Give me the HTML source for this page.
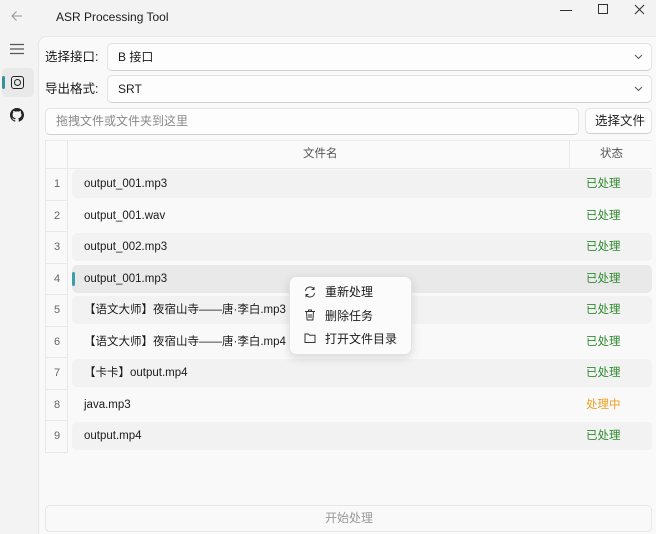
<!DOCTYPE html>
<html><head><meta charset="utf-8"><style>
*{box-sizing:border-box;margin:0;padding:0}
html,body{width:656px;height:534px;overflow:hidden}
body{background:#f3f3f3;font-family:"Liberation Sans","Noto Sans CJK SC",sans-serif;font-size:12px;line-height:14px;color:#1b1b1b;position:relative}
.a{position:absolute;line-height:14px;white-space:nowrap}
.content{left:38px;top:36px;width:630px;height:510px;background:#f9f9f9;border:1px solid #e6e6e6;border-radius:8px 0 0 0}
.box{background:#fdfdfd;border:1px solid #e3e3e3;border-bottom-color:#d0d0d0;border-radius:5px}
.lbl{font-size:12.5px}
.row{left:72px;width:580px;height:28px;border-radius:5px}
.idx{left:46px;width:22px;text-align:center;color:#666;font-size:11px}
.fn{left:84px;font-size:11.5px}
.st{left:586px;font-size:11.5px;color:#2e8b2e}
.ln{background:#e8e8e8}
</style></head><body>
<svg class="a" style="left:10px;top:9px" width="14" height="14" viewBox="0 0 14 14"><path d="M12 7H2M6.5 2.5L2 7l4.5 4.5" fill="none" stroke="#9a9a9a" stroke-width="1.1"/></svg>
<div class="a" style="left:56px;top:10px;font-size:12px">ASR Processing Tool</div>
<div class="a" style="left:560px;top:10px;width:12px;border-top:1px solid #333"></div>
<div class="a" style="left:598px;top:4px;width:10px;height:10px;border:1px solid #333"></div>
<svg class="a" style="left:634px;top:4px" width="11" height="11"><path d="M1 1L10 10M10 1L1 10" stroke="#333" stroke-width="1.1"/></svg>
<svg class="a" style="left:10px;top:43px" width="14" height="12"><path d="M0 1.5H14M0 6H14M0 10.5H14" stroke="#555" stroke-width="1.2"/></svg>
<div class="a" style="left:2px;top:68px;width:32px;height:29px;background:#e9e9e9;border-radius:5px"></div>
<div class="a" style="left:2px;top:76px;width:3px;height:13px;background:#3a8f9b;border-radius:2px"></div>
<div class="a" style="left:11px;top:76px;width:13px;height:13px;border:1.5px solid #222;border-radius:3px"></div>
<div class="a" style="left:14px;top:79px;width:7px;height:7px;border:1.5px solid #222;border-radius:50%"></div>
<svg class="a" style="left:10px;top:108px" width="14" height="14" viewBox="0 0 16 16"><path fill="#222" d="M8 0C3.58 0 0 3.580 0 8c0 3.54 2.29 6.53 5.470 7.59.4.07.55-.17.55-.38v-1.34c-2.23.49-2.7-1.07-2.7-1.07-.36-.92-.89-1.17-.89-1.17-.73-.5.05-.49.05-.49.8.06 1.23.83 1.23.83.72 1.22 1.87.87 2.33.66.07-.52.28-.87.5-1.07-1.78-.2-3.64-.89-3.640-3.95 0-.87.31-1.59.82-2.15-.08-.2-.36-1.02.08-2.12 0 0 .67-.21 2.2.82a7.6 7.6 0 014 0c1.53-1.04 2.2-.82 2.2-.82.44 1.1.16 1.92.08 2.12.51.56.82 1.27.82 2.15 0 3.07-1.87 3.75-3.65 3.95.29.25.54.73.54 1.48v2.2c0 .21.15.46.55.38A8 8 0 0016 8c0-4.42-3.58-8-8-8z"/></svg>
<div class="a content"></div>
<div class="a lbl" style="left:45px;top:50px">选择接口:</div>
<div class="a box" style="left:107px;top:43px;width:545px;height:28px"></div>
<div class="a" style="left:118px;top:50px;font-size:12px">B 接口</div>
<svg class="a" style="left:634px;top:54px" width="9" height="6"><path d="M1 1l3.5 3.5L8 1" fill="none" stroke="#555"/></svg>
<div class="a lbl" style="left:45px;top:82px">导出格式:</div>
<div class="a box" style="left:107px;top:75px;width:545px;height:28px"></div>
<div class="a" style="left:118px;top:82px;font-size:12px">SRT</div>
<svg class="a" style="left:634px;top:86px" width="9" height="6"><path d="M1 1l3.5 3.5L8 1" fill="none" stroke="#555"/></svg>
<div class="a box" style="left:45px;top:108px;width:534px;height:27px"></div>
<div class="a" style="left:56px;top:114px;color:#8a8a8a;font-size:12px">拖拽文件或文件夹到这里</div>
<div class="a box" style="left:585px;top:108px;width:67px;height:26px"></div>
<div class="a" style="left:595px;top:114px;font-size:12.5px">选择文件</div>
<div class="a" style="left:45px;top:140px;width:607px;height:28px;background:#fafafa;border-top:1px solid #ececec"></div>
<div class="a ln" style="left:45px;top:140px;width:1px;height:312px"></div>
<div class="a ln" style="left:67px;top:140px;width:1px;height:312px"></div>
<div class="a ln" style="left:569px;top:140px;width:1px;height:28px"></div>
<div class="a ln" style="left:45px;top:168px;width:607px;height:1px"></div>
<div class="a" style="left:303px;top:147px;color:#555;font-size:11.5px">文件名</div>
<div class="a" style="left:600px;top:147px;color:#555;font-size:11.5px">状态</div>

<div class="a row" style="top:170px;background:#f2f2f2"></div>
<div class="a row" style="top:233px;background:#f2f2f2"></div>
<div class="a row" style="top:265px;background:#e9e9e9"></div>
<div class="a" style="left:72px;top:272px;width:3px;height:14px;background:#3a9fab;border-radius:2px"></div>
<div class="a row" style="top:296px;background:#f2f2f2"></div>
<div class="a row" style="top:359px;background:#f2f2f2"></div>
<div class="a row" style="top:422px;background:#f2f2f2"></div>
<div class="a ln" style="left:45px;top:200px;width:23px;height:1px"></div>
<div class="a ln" style="left:45px;top:231px;width:23px;height:1px"></div>
<div class="a ln" style="left:45px;top:263px;width:23px;height:1px"></div>
<div class="a ln" style="left:45px;top:294px;width:23px;height:1px"></div>
<div class="a ln" style="left:45px;top:326px;width:23px;height:1px"></div>
<div class="a ln" style="left:45px;top:357px;width:23px;height:1px"></div>
<div class="a ln" style="left:45px;top:389px;width:23px;height:1px"></div>
<div class="a ln" style="left:45px;top:420px;width:23px;height:1px"></div>
<div class="a ln" style="left:45px;top:452px;width:23px;height:1px"></div>

<div class="a idx" style="top:177px">1</div><div class="a fn" style="top:177px">output_001.mp3</div><div class="a st" style="top:177px">已处理</div>
<div class="a idx" style="top:209px">2</div><div class="a fn" style="top:209px">output_001.wav</div><div class="a st" style="top:209px">已处理</div>
<div class="a idx" style="top:240px">3</div><div class="a fn" style="top:240px">output_002.mp3</div><div class="a st" style="top:240px">已处理</div>
<div class="a idx" style="top:272px">4</div><div class="a fn" style="top:272px">output_001.mp3</div><div class="a st" style="top:272px">已处理</div>
<div class="a idx" style="top:303px">5</div><div class="a fn" style="top:303px">【语文大师】夜宿山寺——唐·李白.mp3</div><div class="a st" style="top:303px">已处理</div>
<div class="a idx" style="top:335px">6</div><div class="a fn" style="top:335px">【语文大师】夜宿山寺——唐·李白.mp4</div><div class="a st" style="top:335px">已处理</div>
<div class="a idx" style="top:366px">7</div><div class="a fn" style="top:366px">【卡卡】output.mp4</div><div class="a st" style="top:366px">已处理</div>
<div class="a idx" style="top:398px">8</div><div class="a fn" style="top:398px">java.mp3</div><div class="a st" style="top:398px;color:#f0a020">处理中</div>
<div class="a idx" style="top:429px">9</div><div class="a fn" style="top:429px">output.mp4</div><div class="a st" style="top:429px">已处理</div>

<div class="a" style="left:289px;top:276px;width:123px;height:79px;background:#fbfbfb;border:1px solid #e2e2e2;border-radius:7px;box-shadow:0 3px 10px rgba(0,0,0,.13)"></div>
<svg class="a" style="left:304px;top:286px" width="12" height="12" viewBox="0 0 12 12"><path d="M1.5 5A4.5 4.5 0 0 1 10 3.5M10.5 7A4.5 4.5 0 0 1 2 8.5" fill="none" stroke="#333" stroke-width="1"/><path d="M10 1v2.5H7.5M2 11V8.5h2.5" fill="none" stroke="#333" stroke-width="1"/></svg>
<div class="a" style="left:325px;top:285px;font-size:12px">重新处理</div>
<svg class="a" style="left:304px;top:309px" width="12" height="12" viewBox="0 0 12 12"><path d="M1 2.5h10M4.5 2.5V1h3v1.5M2.5 2.5l.6 8.5h5.8l.6-8.5M5 5v4M7 5v4" fill="none" stroke="#333" stroke-width="1"/></svg>
<div class="a" style="left:325px;top:309px;font-size:12px">删除任务</div>
<svg class="a" style="left:304px;top:332px" width="12" height="12" viewBox="0 0 12 12"><path d="M1 2h3.5l1 1.3H11V10.5H1z" fill="none" stroke="#333" stroke-width="1"/></svg>
<div class="a" style="left:325px;top:332px;font-size:12px">打开文件目录</div>

<div class="a" style="left:45px;top:505px;width:607px;height:27px;border:1px solid #e6e6e6;border-radius:5px;background:#f9f9f9"></div>
<div class="a" style="left:325px;top:511px;color:#9a9a9a;font-size:12px">开始处理</div>
</body></html>
